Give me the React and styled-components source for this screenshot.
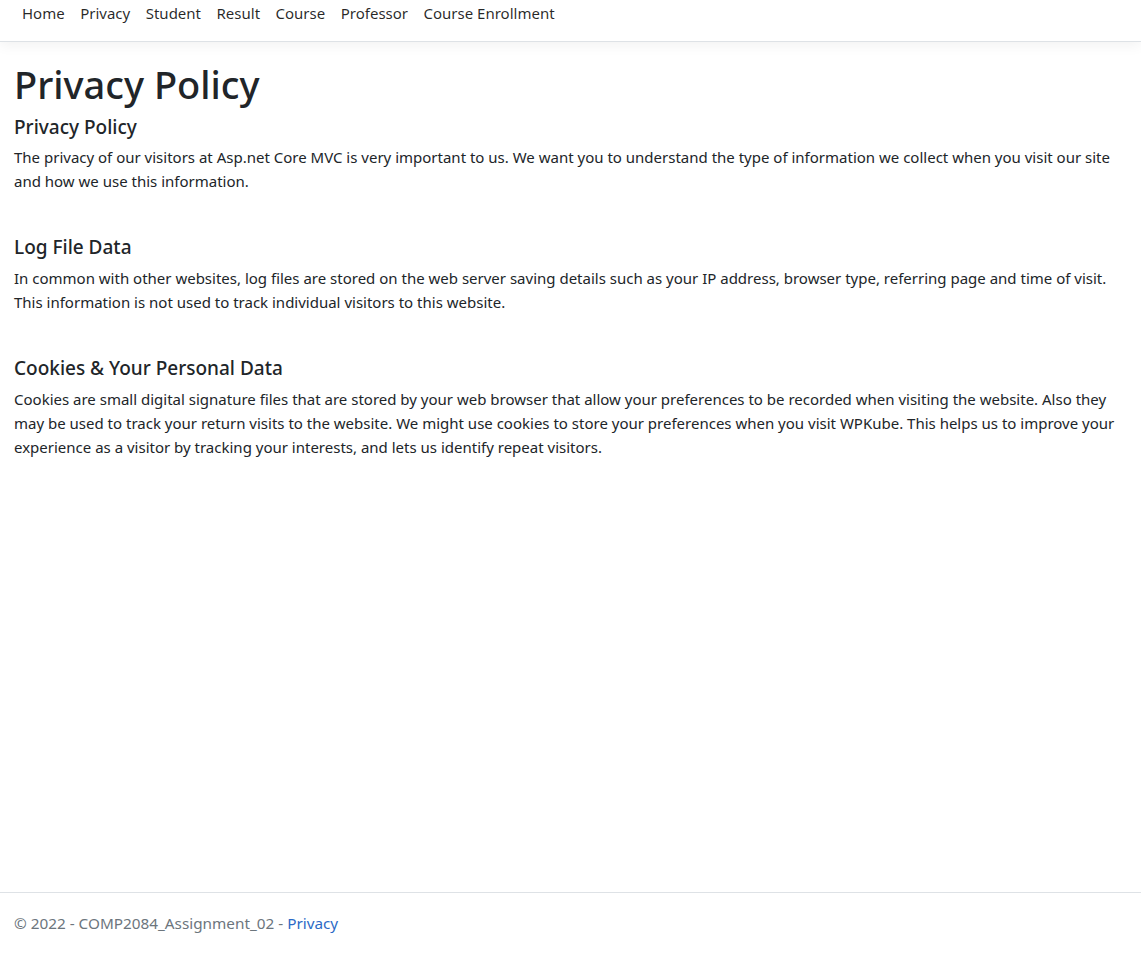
import styled, { createGlobalStyle } from "styled-components";

const GlobalStyle = createGlobalStyle`
  html, body {
    margin: 0;
    padding: 0;
    background: #fff;
  }
  body {
    font-family: "Noto Sans", "Open Sans", sans-serif;
    font-size: 15px;
    line-height: 24px;
    color: #212529;
  }
`;

const Page = styled.div`
  display: flex;
  flex-direction: column;
  min-height: 100vh;
`;

const Navbar = styled.header`
  height: 42px;
  border-bottom: 1px solid #dee2e6;
  box-shadow: 0 4px 12px rgba(0, 0, 0, 0.05);
  box-sizing: border-box;
`;

const NavList = styled.nav`
  display: flex;
  padding: 0 6px 0 14px;
`;

const NavLink = styled.a`
  display: block;
  padding: 1px 7.5px 0 8px;
  line-height: 24px;
  color: rgba(0, 0, 0, 0.85);
  text-decoration: none;
  font-size: 15px;
`;

const Main = styled.main`
  flex: 1;
  padding: 20px 14px 17px;
`;

const Title = styled.h1`
  margin: 0 0 8px;
  font-size: 38px;
  font-weight: 500;
  line-height: 1.2;
`;

const SectionTitle = styled.h5`
  margin: ${({ first }) => (first ? "0" : "43px")} 0 7px;
  font-size: 19px;
  font-weight: 500;
  line-height: 1.2;
`;

const Paragraph = styled.p`
  margin: 0;
`;

const Footer = styled.footer`
  border-top: 1px solid #dee2e6;
  line-height: 60px;
  padding: 0 14px;
  color: #6c757d;
  font-size: 15.3px;
`;

const FooterLink = styled.a`
  color: #2c6ac6;
  text-decoration: none;
`;

const links = [
  "Home",
  "Privacy",
  "Student",
  "Result",
  "Course",
  "Professor",
  "Course Enrollment",
];

const sections = [
  {
    title: "Privacy Policy",
    text: "The privacy of our visitors at Asp.net Core MVC is very important to us. We want you to understand the type of information we collect when you visit our site and how we use this information.",
  },
  {
    title: "Log File Data",
    text: "In common with other websites, log files are stored on the web server saving details such as your IP address, browser type, referring page and time of visit. This information is not used to track individual visitors to this website.",
  },
  {
    title: "Cookies & Your Personal Data",
    text: "Cookies are small digital signature files that are stored by your web browser that allow your preferences to be recorded when visiting the website. Also they may be used to track your return visits to the website. We might use cookies to store your preferences when you visit WPKube. This helps us to improve your experience as a visitor by tracking your interests, and lets us identify repeat visitors.",
  },
];

export default function App() {
  return (
    <>
      <GlobalStyle />
      <Page>
        <Navbar>
          <NavList>
            {links.map((l) => (
              <NavLink key={l} href="#">
                {l}
              </NavLink>
            ))}
          </NavList>
        </Navbar>
        <Main>
          <Title>Privacy Policy</Title>
          {sections.map((s, i) => (
            <div key={s.title}>
              <SectionTitle first={i === 0}>{s.title}</SectionTitle>
              <Paragraph>{s.text}</Paragraph>
            </div>
          ))}
        </Main>
        <Footer>
          © 2022 - COMP2084_Assignment_02 - <FooterLink href="#">Privacy</FooterLink>
        </Footer>
      </Page>
    </>
  );
}
